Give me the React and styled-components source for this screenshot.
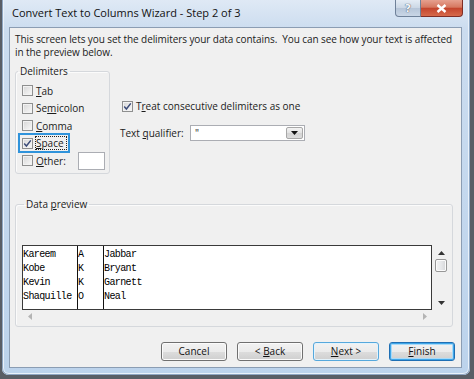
import React from 'react';
import styled, { createGlobalStyle } from 'styled-components';

const GlobalStyle = createGlobalStyle`
  html, body {
    margin: 0;
    padding: 0;
  }
  body {
    width: 474px;
    height: 379px;
    overflow: hidden;
    font-family: 'Open Sans', 'Segoe UI', sans-serif;
    font-size: 10px;
    color: #1b1b1b;
  }
`;

const Desktop = styled.div`
  width: 474px;
  height: 379px;
  box-sizing: border-box;
  padding: 0 4px 4px 2px;
  background: #595e66;
  display: flex;
`;

const Window = styled.div`
  flex: 1;
  display: flex;
  flex-direction: column;
  min-height: 0;
  padding: 0 8px 7px 7px;
  background: linear-gradient(to bottom, #dfe9f5 0px, #cbdcef 30px, #bcd3ec 100%);
  border-radius: 0 0 7px 7px;
  box-shadow: inset 1px 0 0 #8ea6c2, inset -1px 0 0 #8ea6c2, inset 0 -1px 0 #8ea6c2,
    inset 2px 0 0 #e9f1fa, inset -2px 0 0 #e9f1fa, inset 0 -2px 0 #e9f1fa;
`;

const TitleBar = styled.div`
  height: 27px;
  flex: none;
  display: flex;
  align-items: flex-start;
`;

const Title = styled.div`
  margin-left: 3px;
  line-height: 26px;
  font-size: 11px;
  color: #111;
`;

const Controls = styled.div`
  margin-left: auto;
  margin-right: -1px;
  display: flex;
`;

const HelpButton = styled.div`
  width: 26px;
  height: 17px;
  box-sizing: border-box;
  border: 1px solid #6f8199;
  border-top: none;
  border-radius: 0 0 0 4px;
  background: linear-gradient(to bottom, #e4ecf5, #cbd7e5 50%, #b6c5d8 51%, #c9d6e6);
  display: flex;
  align-items: center;
  justify-content: center;
  font: bold 11px 'DejaVu Sans', sans-serif;
  color: #f4f6f9;
  text-shadow: 0 0 1px #4c5a6c, 0 0 1px #4c5a6c;
`;

const CloseButton = styled.div`
  width: 42px;
  height: 17px;
  box-sizing: border-box;
  border: 1px solid #7f2d25;
  border-top: none;
  border-left: none;
  border-radius: 0 0 4px 0;
  background: linear-gradient(to bottom, #e6a08f, #d67860 45%, #c4452d 52%, #d66a4b);
  display: flex;
  align-items: center;
  justify-content: center;
`;

const Client = styled.div`
  flex: 1;
  min-height: 0;
  display: flex;
  flex-direction: column;
  background: #f0f0f0;
  border: 1px solid #8b9db3;
  padding: 5px 8px 0 5px;
`;

const Description = styled.p`
  margin: 0;
  line-height: 13px;
  white-space: nowrap;
  letter-spacing: -0.08px;
`;

const TopSection = styled.div`
  display: flex;
  align-items: flex-start;
  margin-top: 6px;
`;

const GroupBox = styled.fieldset`
  margin: ${({ $margin }) => $margin || 0};
  min-width: 0;
  box-sizing: border-box;
  width: ${({ $width }) => $width || 'auto'};
  padding: ${({ $padding }) => $padding};
  border: 1px solid #d5d8dc;
  border-radius: 3px;
  box-shadow: inset 1px 1px 0 #fbfbfb;
`;

const Legend = styled.legend`
  margin-left: 2px;
  padding: 0 2px;
  line-height: 13px;
`;

const CheckRow = styled.div`
  display: flex;
  align-items: center;
  height: 17.5px;
  padding: 0 4px 0 6px;
`;

const CheckLabel = styled.span`
  display: inline-flex;
  align-items: center;
  gap: 3px;
  outline: ${({ $focused }) => ($focused ? '2px solid #2f93db' : 'none')};
  outline-offset: 2px;
`;

const LabelText = styled.span`
  line-height: 12px;
  padding-right: ${({ $focused }) => ($focused ? '2px' : '0')};
  outline: ${({ $focused }) => ($focused ? '1px dotted #222' : 'none')};
`;

const Box = styled.span`
  width: 11px;
  height: 11px;
  box-sizing: border-box;
  flex: none;
  border: 1px solid #8e8f8f;
  background: linear-gradient(135deg, #d6d6d6, #f9f9f9);
  box-shadow: inset 0 0 0 1px #f2f2f2;
  display: flex;
  align-items: center;
  justify-content: center;
`;

const SmallInput = styled.span`
  margin-left: auto;
  width: 27px;
  height: 18px;
  box-sizing: border-box;
  border: 1px solid #abadb3;
  background: #fff;
`;

const Options = styled.div`
  display: flex;
  flex-direction: column;
  margin-left: 10px;
  padding-top: 34px;
`;

const OptionRow = styled.div`
  display: flex;
  align-items: center;
  height: 14px;
  padding-left: 2px;
`;

const QualifierRow = styled.div`
  display: flex;
  align-items: center;
  height: 16px;
  margin-top: 12px;
`;

const QualifierLabel = styled.span`
  width: 70px;
`;

const Select = styled.div`
  width: 115px;
  height: 16px;
  box-sizing: border-box;
  border: 1px solid #abadb3;
  background: #fff;
  display: flex;
  align-items: center;
  padding: 0 1px 0 4px;
`;

const SelectValue = styled.span`
  flex: 1;
  line-height: 12px;
`;

const SelectArrow = styled.span`
  width: 17px;
  height: 12px;
  box-sizing: border-box;
  border: 1px solid #a7a7a7;
  border-radius: 2px;
  background: linear-gradient(to bottom, #f3f3f3, #e2e2e2 50%, #d3d3d3 51%, #dcdcdc);
  display: flex;
  align-items: center;
  justify-content: center;
`;

const PreviewArea = styled.div`
  display: grid;
  grid-template-columns: 410px 16px;
  grid-template-rows: 65px 13px;
`;

const PreviewTable = styled.div`
  display: flex;
  border: 1px solid #3a3a3a;
  background: #fff;
  overflow: hidden;
`;

const PreviewColumn = styled.div`
  width: ${({ $width }) => $width};
  flex: ${({ $grow }) => ($grow ? 1 : 'none')};
  box-sizing: border-box;
  border-left: ${({ $first }) => ($first ? 'none' : '1px solid #111')};
  padding-top: 2px;
  font-family: 'Liberation Mono', monospace;
  font-size: 10px;
  letter-spacing: -0.6px;
  color: #000;
`;

const Cell = styled.div`
  height: 14px;
  line-height: 14px;
  white-space: pre;
`;

const VScroll = styled.div`
  display: flex;
  flex-direction: column;
  align-items: center;
  padding: 6px 0 5px 2px;
`;

const Spacer = styled.div`
  flex: 1;
`;

const Thumb = styled.div`
  width: 12px;
  height: 13px;
  box-sizing: border-box;
  margin-top: 4px;
  border: 1px solid #979797;
  border-radius: 2px;
  background: linear-gradient(to right, #f3f3f3, #e7e8ea 50%, #d6d7d9);
  box-shadow: inset 0 0 0 1px #fbfbfb;
`;

const HScroll = styled.div`
  display: flex;
  align-items: center;
  justify-content: space-between;
  padding: 0 5px 0 6px;
`;

const ButtonRow = styled.div`
  display: flex;
  justify-content: flex-end;
  gap: 10px;
  margin: 15px -2px 0 0;
`;

const variants = {
  normal: 'border: 1px solid #707070; box-shadow: inset 0 0 0 1px #fbfbfb;',
  hover: 'border: 1px solid #56a8dc; box-shadow: inset 0 0 0 1px #e3f3fc;',
  default: 'border: 1px solid #1f6fb4; box-shadow: inset 0 0 0 1px #3ea6e8, inset 0 0 0 2px #a9daf8;',
};

const Button = styled.div`
  width: 66px;
  height: 19px;
  box-sizing: border-box;
  border-radius: 3px;
  ${({ $variant }) => variants[$variant || 'normal']}
  background: linear-gradient(to bottom, #f2f2f2, #ebebeb 50%, #dddddd 51%, #cfcfcf);
  display: flex;
  align-items: center;
  justify-content: center;
  white-space: pre;
  color: #111;
`;

const Check = () => (
  <svg width="9" height="9" viewBox="0 0 9 9">
    <path d="M1.2 4.6 L3.4 7 L7.8 1.4" fill="none" stroke="#3b4b78" strokeWidth="1.5" />
  </svg>
);

const CheckBox = ({ checked }) => <Box>{checked && <Check />}</Box>;

const Arrow = ({ dir, color = '#222' }) => {
  const shapes = {
    up: 'M0 4 L3.5 0 L7 4 Z',
    down: 'M0 0 L7 0 L3.5 4 Z',
    left: 'M4 0 L4 7 L0 3.5 Z',
    right: 'M0 0 L4 3.5 L0 7 Z',
  };
  const vertical = dir === 'up' || dir === 'down';
  return (
    <svg width={vertical ? 7 : 4} height={vertical ? 4 : 7}>
      <path d={shapes[dir]} fill={color} />
    </svg>
  );
};

const delimiters = [
  { key: 'tab', label: <><u>T</u>ab</> },
  { key: 'semi', label: <>Se<u>m</u>icolon</> },
  { key: 'comma', label: <><u>C</u>omma</> },
  { key: 'space', label: <><u>S</u>pace</>, checked: true, focused: true },
  { key: 'other', label: <><u>O</u>ther:</>, input: true },
];

const preview = [
  ['Kareem', 'A', 'Jabbar'],
  ['Kobe', 'K', 'Bryant'],
  ['Kevin', 'K', 'Garnett'],
  ['Shaquille', 'O', 'Neal'],
];

const columns = [
  { width: '54px', first: true },
  { width: '26px' },
  { grow: true },
];

export default function App() {
  return (
    <>
      <GlobalStyle />
      <Desktop>
        <Window>
          <TitleBar>
            <Title>Convert Text to Columns Wizard - Step 2 of 3</Title>
            <Controls>
              <HelpButton>?</HelpButton>
              <CloseButton>
                <svg width="11" height="9" viewBox="0 0 11 9">
                  <path d="M1.5 1 L9.5 8 M9.5 1 L1.5 8" stroke="#fff" strokeWidth="2.4" />
                </svg>
              </CloseButton>
            </Controls>
          </TitleBar>
          <Client>
            <Description>
              This screen lets you set the delimiters your data contains.&nbsp; You can see how your text is affected
              <br />
              in the preview below.
            </Description>
            <TopSection>
              <GroupBox $width="95px" $padding="4px 0 3px 0">
                <Legend>Delimiters</Legend>
                {delimiters.map((d) => (
                  <CheckRow key={d.key}>
                    <CheckLabel $focused={d.focused}>
                      <CheckBox checked={d.checked} />
                      <LabelText $focused={d.focused}>{d.label}</LabelText>
                    </CheckLabel>
                    {d.input && <SmallInput />}
                  </CheckRow>
                ))}
              </GroupBox>
              <Options>
                <OptionRow>
                  <CheckLabel>
                    <CheckBox checked />
                    <LabelText>T<u>r</u>eat consecutive delimiters as one</LabelText>
                  </CheckLabel>
                </OptionRow>
                <QualifierRow>
                  <QualifierLabel>Text <u>q</u>ualifier:</QualifierLabel>
                  <Select>
                    <SelectValue>"</SelectValue>
                    <SelectArrow>
                      <Arrow dir="down" color="#111" />
                    </SelectArrow>
                  </Select>
                </QualifierRow>
              </Options>
            </TopSection>
            <GroupBox $padding="33.5px 4px 3px 6px" $margin="24.5px 0 0 0">
              <Legend>Data <u>p</u>review</Legend>
              <PreviewArea>
                <PreviewTable>
                  {columns.map((c, i) => (
                    <PreviewColumn key={i} $width={c.width} $grow={c.grow} $first={c.first}>
                      {preview.map((row, r) => (
                        <Cell key={r}>{row[i]}</Cell>
                      ))}
                    </PreviewColumn>
                  ))}
                </PreviewTable>
                <VScroll>
                  <Arrow dir="up" color="#333" />
                  <Thumb />
                  <Spacer />
                  <Arrow dir="down" color="#333" />
                </VScroll>
                <HScroll>
                  <Arrow dir="left" color="#b4b4b4" />
                  <Arrow dir="right" color="#b4b4b4" />
                </HScroll>
              </PreviewArea>
            </GroupBox>
            <ButtonRow>
              <Button>Cancel</Button>
              <Button>{'< '}<u>B</u>ack</Button>
              <Button $variant="hover"><u>N</u>ext{' >'}</Button>
              <Button $variant="default"><u>F</u>inish</Button>
            </ButtonRow>
          </Client>
        </Window>
      </Desktop>
    </>
  );
}
